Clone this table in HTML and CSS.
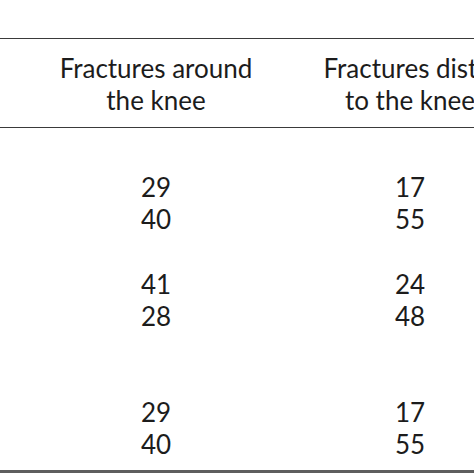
FILE: index.html
```html
<!DOCTYPE html>
<html>
<head>
<meta charset="utf-8">
<link rel="stylesheet" href="styles.css">
</head>
<body>
<table class="data">
  <thead>
    <tr>
      <th class="label"></th>
      <th class="col">Fractures around<br>the knee</th>
      <th class="col">Fractures distal<br>to the knee</th>
    </tr>
  </thead>
  <tbody>
    <tr class="spacer-top"><td class="label"></td><td></td><td></td></tr>
    <tr><td class="label"></td><td>29</td><td>17</td></tr>
    <tr><td class="label"></td><td>40</td><td>55</td></tr>
    <tr class="gap"><td class="label"></td><td></td><td></td></tr>
    <tr><td class="label"></td><td>41</td><td>24</td></tr>
    <tr><td class="label"></td><td>28</td><td>48</td></tr>
    <tr class="gap2"><td class="label"></td><td></td><td></td></tr>
    <tr><td class="label"></td><td>29</td><td>17</td></tr>
    <tr><td class="label"></td><td>40</td><td>55</td></tr>
    <tr class="spacer-bottom"><td class="label"></td><td></td><td></td></tr>
  </tbody>
</table>
</body>
</html>
```

FILE: styles.css
```css
html, body {
  margin: 0;
  padding: 0;
  background: #ffffff;
  overflow: hidden;
}
body {
  width: 474px;
  height: 474px;
}
.data {
  margin-top: 38px;
  border-collapse: collapse;
  table-layout: fixed;
  width: 537px;
  font-family: "Lato", "Open Sans", sans-serif;
  font-size: 26px;
  color: #1c1c1c;
  border-top: 1.5px solid #3a3a3a;
  border-bottom: 3px solid #5e5e5e;
}
.data th, .data td {
  padding: 0;
  text-align: center;
  line-height: 32px;
  font-weight: normal;
}
.data .label {
  width: 29px;
}
.data .col {
  width: 254px;
}
.data thead th {
  padding-top: 13px;
  padding-bottom: 11px;
  border-bottom: 1.5px solid #3a3a3a;
}
.data tbody td {
  height: 32px;
}
.data tr.spacer-top td {
  height: 43px;
}
.data tr.gap td {
  height: 33px;
}
.data tr.gap2 td {
  height: 64px;
}
.data tr.spacer-bottom td {
  height: 10px;
}
```
